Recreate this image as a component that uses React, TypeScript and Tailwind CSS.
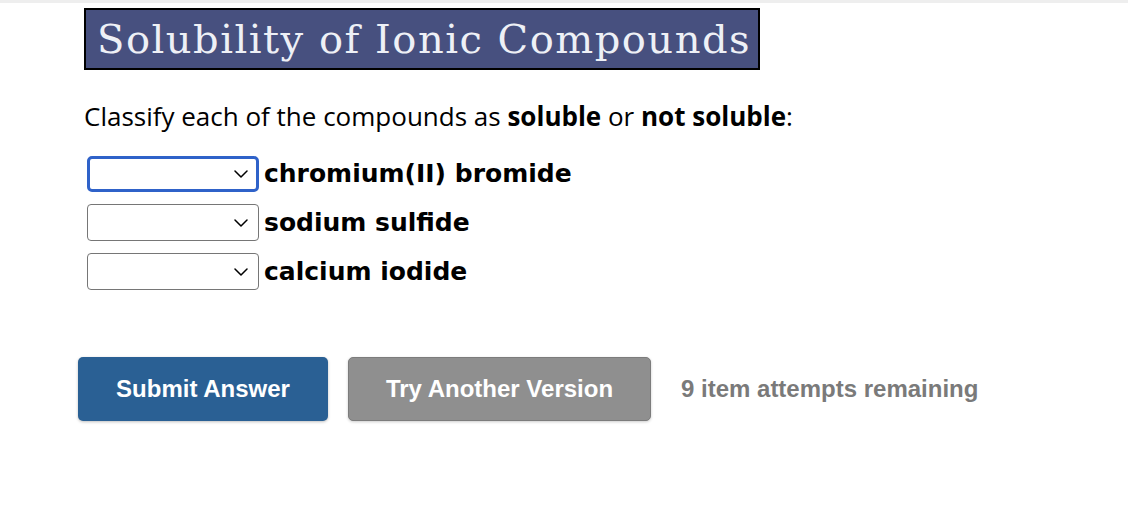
const compounds = ["chromium(II) bromide", "sodium sulfide", "calcium iodide"];

function Picker({ focused }: { focused?: boolean }) {
  return (
    <div
      className={
        focused
          ? "relative h-[36px] w-[172px] rounded-[5px] border-[3px] border-[#2f62c9] bg-white"
          : "relative h-[37px] w-[172px] rounded-[4px] border border-[#767676] bg-white"
      }
    >
      <svg
        viewBox="0 0 14 8"
        className={focused ? "absolute right-[8px] top-1/2 h-[8px] w-[14px] -translate-y-1/2" : "absolute right-[10px] top-1/2 h-[8px] w-[14px] -translate-y-1/2"}
        fill="none"
        stroke="black"
        strokeWidth={1.5}
        strokeLinecap="round"
        strokeLinejoin="round"
      >
        <polyline points="1,1 7,7 13,1" />
      </svg>
    </div>
  );
}

export default function App() {
  return (
    <div className="min-h-[510px] w-[1128px] bg-white">
      <div className="h-[3px] bg-[#eeeeee]" />
      <div className="pl-[84px] pt-[5px]">
        <div className="inline-flex h-[62px] w-[676px] items-center border-2 border-black bg-[#47507f] pl-[11px]">
          <h1 className="text-[40px] leading-none tracking-[1.5px] text-[#eef0f6] [font-family:'DejaVu_Serif',serif]">
            Solubility of Ionic Compounds
          </h1>
        </div>

        <p className="mt-[30px] text-[26px] leading-[32px] text-black [font-family:'Open_Sans',sans-serif]">
          Classify each of the compounds as <b>soluble</b> or <b>not soluble</b>:
        </p>

        <div className="mt-[23px] flex flex-col gap-[12px] pl-[3px]">
          {compounds.map((c, i) => (
            <div key={c} className="flex h-[37px] items-center gap-[5px]">
              <Picker focused={i === 0} />
              <span className="text-[25px] font-bold leading-none text-black [font-family:'DejaVu_Sans',sans-serif]">{c}</span>
            </div>
          ))}
        </div>

        <div className="-ml-[6px] mt-[67px] flex items-center gap-[20px] [font-family:'Liberation_Sans',Arial,sans-serif]">
          <button className="h-[64px] w-[250px] rounded-[5px] bg-[#2a6094] text-[24px] font-bold text-white shadow-[0_1px_3px_rgba(0,0,0,0.25)]">
            Submit Answer
          </button>
          <button className="h-[64px] w-[303px] rounded-[5px] border border-[#7c7c7c] bg-[#8f8f8f] text-[24px] font-bold text-white shadow-[0_1px_3px_rgba(0,0,0,0.2)]">
            Try Another Version
          </button>
          <span className="ml-[10px] text-[24px] font-bold text-[#7a7a7a]">9 item attempts remaining</span>
        </div>
      </div>
    </div>
  );
}
